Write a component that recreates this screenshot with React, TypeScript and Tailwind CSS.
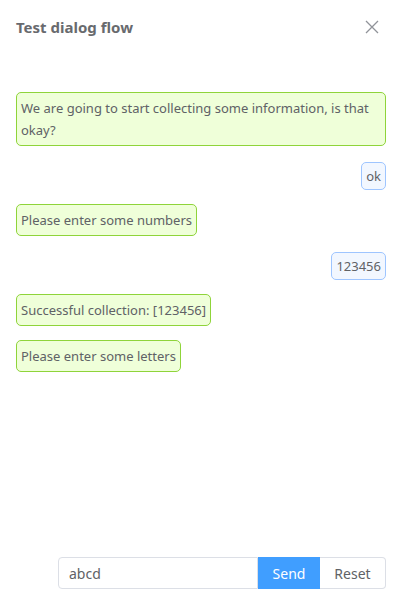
import { useState } from 'react';

type Msg = { from: 'bot' | 'user'; text: string };

const MESSAGES: Msg[] = [
  { from: 'bot', text: 'We are going to start collecting some information, is that okay?' },
  { from: 'user', text: 'ok' },
  { from: 'bot', text: 'Please enter some numbers' },
  { from: 'user', text: '123456' },
  { from: 'bot', text: 'Successful collection: [123456]' },
  { from: 'bot', text: 'Please enter some letters' },
];

export default function App() {
  const [value, setValue] = useState('abcd');

  return (
    <div
      className="flex h-[602px] w-[405px] flex-col bg-white text-[#606266]"
      style={{ fontFamily: '"Noto Sans", "Open Sans", sans-serif' }}
    >
      <div className="flex h-[54px] items-center justify-between pl-4 pr-[26px]">
        <h2 className="text-[15px] font-bold text-[#686a6e]">Test dialog flow</h2>
        <button type="button" className="text-[#909399]">
          <svg width="14" height="14" viewBox="0 0 14 14" fill="none" stroke="currentColor" strokeWidth="1.3">
            <path d="M1 1L13 13M13 1L1 13" />
          </svg>
        </button>
      </div>

      <div className="flex flex-1 flex-col pl-4 pr-[19px] pt-[38px] text-[13px] leading-[22px]">
        {MESSAGES.map((m, i) =>
          m.from === 'bot' ? (
            <div key={i} className={i === 0 ? 'flex' : 'mt-[14px] flex'}>
              <div className="rounded-[5px] border border-[#8fd43a] bg-[#efffd9] px-1 py-1">
                {m.text}
              </div>
            </div>
          ) : (
            <div key={i} className="mt-4 flex justify-end">
              <div className="rounded-[5px] border border-[#9ec5ff] bg-[#f2f7ff] px-1 py-[2px]">
                {m.text}
              </div>
            </div>
          ),
        )}
      </div>

      <div className="flex justify-end pb-[13px] pr-[19px]">
        <input
          value={value}
          onChange={(e) => setValue(e.target.value)}
          className="h-8 w-[200px] rounded-l-[4px] border border-[#dcdfe6] px-[10px] text-[14px] text-[#606266] outline-none"
        />
        <button type="button" className="h-8 w-[62px] bg-[#409eff] text-[14px] text-white">
          Send
        </button>
        <button
          type="button"
          className="h-8 w-[66px] rounded-r-[4px] border border-l-0 border-[#dcdfe6] bg-white text-[14px] text-[#606266]"
        >
          Reset
        </button>
      </div>
    </div>
  );
}
